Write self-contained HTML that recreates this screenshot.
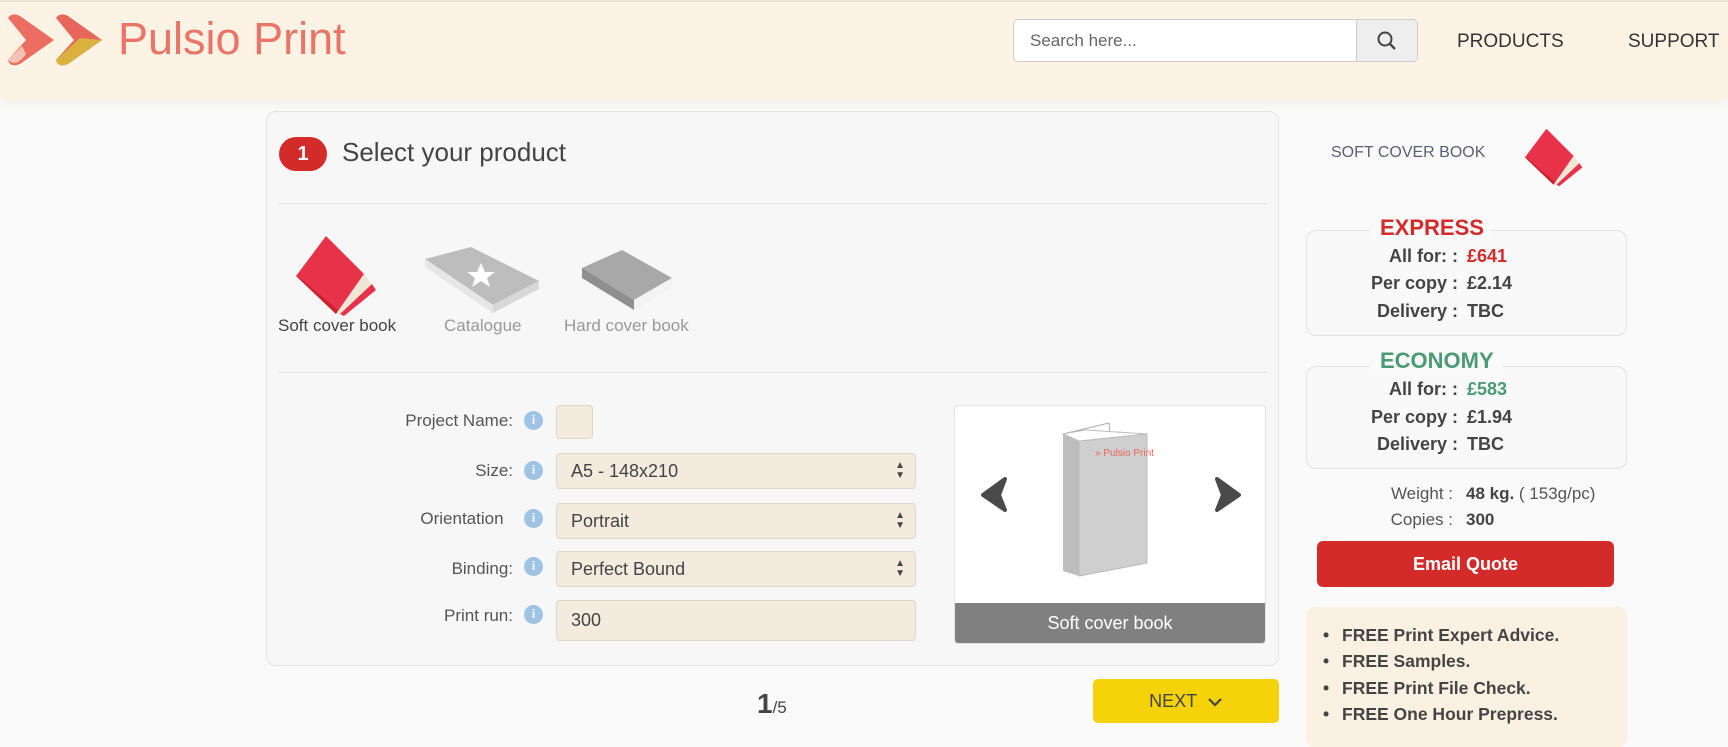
<!DOCTYPE html>
<html><head><meta charset="utf-8"><style>
*{box-sizing:border-box;margin:0;padding:0}
body{width:1728px;height:740px;overflow:hidden;background:#fafafa;font-family:"Liberation Sans",Arial,sans-serif;color:#444;position:relative}
.abs{position:absolute}
.hdr{left:0;top:0;width:1728px;height:100px;background:#fcf3e4;border-top:2px solid #e8e2d8;box-shadow:0 4px 8px #f3f0ea}
.logo{left:118px;top:13px;font-size:45px;color:#ea7468;letter-spacing:0px;font-weight:normal}
.search{left:1013px;top:19px;width:405px;height:43px;background:#fff;border:1px solid #ccc;border-radius:5px;overflow:hidden}
.search span{position:absolute;left:16px;top:11px;font-size:17px;color:#666}
.search .btn{position:absolute;right:0;top:0;width:61px;height:43px;background:#eee;border-left:1px solid #ccc}
.nav{top:31px;font-size:19px;color:#333}
.card{left:266px;top:111px;width:1013px;height:555px;background:#f7f7f7;border:1px solid #e3e3e3;border-radius:10px}
.badge{left:279px;top:137px;width:48px;height:34px;background:#d32a2a;border-radius:17px;color:#fff;font-weight:bold;font-size:20px;text-align:center;line-height:34px}
.title{left:342px;top:137px;font-size:26px;color:#444}
.hr{height:1px;background:#e6e6e6;left:279px;width:988px}
.plabel{font-size:17px;top:316px}
.lab{font-size:17px;color:#555;text-align:right;width:240px;left:273px}
.info{width:19px;height:19px;border-radius:50%;background:#9fc3e4;left:524px;color:#fff;font-size:12px;font-weight:bold;text-align:center;line-height:19px}
.inp{left:556px;width:360px;background:#f4ebdf;border:1px solid #dcd6cc;border-radius:4px;font-size:18px;color:#444;padding-left:14px}
.arr{position:absolute;right:10px;top:50%;margin-top:-10px;font-size:10px;line-height:10px;color:#444}
.prev{left:954px;top:405px;width:312px;height:239px;background:#fff;border:1px solid #e3e3e3;border-radius:4px;overflow:hidden}
.cap{position:absolute;left:0;bottom:0;width:100%;height:40px;background:#808080;color:#fff;font-size:18px;text-align:center;line-height:40px}
.next{left:1093px;top:679px;width:186px;height:44px;background:#f5d20a;border-radius:5px;text-align:center;line-height:44px;font-size:18px;color:#444}
.qbox{left:1306px;width:321px;border:1px solid #e3e3e3;border-radius:10px;background:#f9f9f9}
.qt{font-size:22px;font-weight:bold;background:#fafafa;padding:0 10px;text-align:center}
.row{font-size:18px;font-weight:bold;color:#444}
.row .l{position:absolute;right:270px;white-space:nowrap}
.row .v{position:absolute;left:1467px;white-space:nowrap}
.email{left:1317px;top:541px;width:297px;height:46px;background:#d32a2a;border-radius:6px;color:#fff;font-weight:bold;font-size:18px;text-align:center;line-height:46px}
.free{left:1306px;top:607px;width:321px;height:140px;background:#fbf1e2;border-radius:8px}
.free li{position:absolute;left:36px;font-size:17.5px;font-weight:bold;color:#444;list-style:none;white-space:nowrap}
.free li:before{content:"•";position:absolute;left:-19px}
</style></head><body>
<div class="abs hdr"></div>
<svg class="abs" style="left:4px;top:12px" width="100" height="56" viewBox="0 0 100 56">
<path d="M4 6 Q8 0 16 4 L50 28 L16 52 Q6 56 4 48 L22 28 Z" fill="#ec6e62"/>
<path d="M4 48 L18 34 L22 42 Q12 56 4 48Z" fill="#f2c3b3"/>
<path d="M52 6 Q56 0 64 4 L98 28 L64 52 Q54 56 52 48 L70 28 Z" fill="#e6665c"/>
<path d="M52 48 L76 26 L98 28 L64 52 Q54 56 52 48Z" fill="#d9b13c"/>
</svg>
<div class="abs logo">Pulsio Print</div>
<div class="abs search"><span>Search here...</span><div class="btn"><svg width="61" height="43"><circle cx="28" cy="19" r="6.5" fill="none" stroke="#444" stroke-width="2"/><line x1="33" y1="24" x2="38" y2="29" stroke="#444" stroke-width="2.4"/></svg></div></div>
<div class="abs nav" style="left:1457px">PRODUCTS</div>
<div class="abs nav" style="left:1628px">SUPPORT</div>

<div class="abs card"></div>
<div class="abs badge">1</div>
<div class="abs title">Select your product</div>
<div class="abs hr" style="top:203px"></div>
<svg class="abs" style="left:292px;top:232px" width="92" height="84" viewBox="0 0 92 84">
<path d="M4 44 L34 4 L72 42 L44 82 Z" fill="#e8324a"/>
<path d="M4 44 L44 82 L46 78 L8 46Z" fill="#c92330"/>
<path d="M72 42 L80 52 L50 82 L44 82 Z" fill="#efe6d6"/>
<path d="M80 52 L84 58 L52 84 L48 82Z" fill="#e8324a"/>
</svg>
<svg class="abs" style="left:423px;top:245px" width="118" height="70" viewBox="0 0 118 70">
<path d="M2 14 L48 2 L116 36 L70 60 Z" fill="#bdbdbd"/>
<path d="M2 14 L70 60 L70 68 L2 22Z" fill="#e6e6e6"/>
<path d="M70 60 L116 36 L116 44 L70 68Z" fill="#d8d8d8"/>
<path d="M58 18 L62 27 L72 27 L64 33 L67 42 L58 36 L49 42 L52 33 L44 27 L54 27Z" fill="#fff"/>
</svg>
<svg class="abs" style="left:580px;top:248px" width="94" height="66" viewBox="0 0 94 66">
<path d="M2 20 L42 2 L92 30 L54 52 Z" fill="#a8a8a8"/>
<path d="M2 20 L54 52 L54 62 L2 30Z" fill="#8f8f8f"/>
<path d="M54 52 L92 30 L92 40 L54 62Z" fill="#f3f3f3"/>
</svg>
<div class="abs plabel" style="left:278px;color:#444">Soft cover book</div>
<div class="abs plabel" style="left:444px;color:#999">Catalogue</div>
<div class="abs plabel" style="left:564px;color:#999">Hard cover book</div>
<div class="abs hr" style="top:372px"></div>

<div class="abs lab" style="top:411px">Project Name:</div><div class="abs info" style="top:411px">i</div>
<div class="abs inp" style="top:405px;width:37px;height:34px"></div>
<div class="abs lab" style="top:461px">Size:</div><div class="abs info" style="top:461px">i</div>
<div class="abs inp" style="top:453px;height:36px;line-height:34px">A5 - 148x210<span class="arr">▲<br>▼</span></div>
<div class="abs lab" style="top:509px">Orientation&nbsp;&nbsp;</div><div class="abs info" style="top:509px">i</div>
<div class="abs inp" style="top:503px;height:36px;line-height:34px">Portrait<span class="arr">▲<br>▼</span></div>
<div class="abs lab" style="top:559px">Binding:</div><div class="abs info" style="top:557px">i</div>
<div class="abs inp" style="top:551px;height:36px;line-height:34px">Perfect Bound<span class="arr">▲<br>▼</span></div>
<div class="abs lab" style="top:606px">Print run:</div><div class="abs info" style="top:605px">i</div>
<div class="abs inp" style="top:600px;height:41px;line-height:39px">300</div>

<div class="abs prev">
<svg style="position:absolute;left:0;top:0" width="312" height="200">
<path d="M50 73 L28 89 L50 104 L44 89Z" fill="#4a4a4a" stroke="#4a4a4a" stroke-width="4" stroke-linejoin="round"/>
<path d="M262 73 L284 89 L262 104 L268 89Z" fill="#4a4a4a" stroke="#4a4a4a" stroke-width="4" stroke-linejoin="round"/>
<path d="M108 28 L154 17 L155 27Z" fill="#fff" stroke="#aaa"/>
<path d="M108 28 L124 35 L124 170 L108 165Z" fill="#bdbdbd"/>
<path d="M124 35 L192 28 L192 157 L124 170Z" fill="#cfcfcf" stroke="#bbb"/>
<path d="M108 28 L130 24 L192 28 L124 35Z" fill="#fff" stroke="#bbb"/>
<text x="140" y="50" font-size="10" fill="#e8685c" font-family="Liberation Sans">» Pulsio Print</text>
</svg>
<div class="cap">Soft cover book</div></div>

<div class="abs" style="left:757px;top:688px;font-size:28px;font-weight:bold;color:#444">1<span style="font-size:17px;font-weight:normal">/5</span></div>
<div class="abs next">NEXT &nbsp;<svg width="16" height="10" viewBox="0 0 16 10"><path d="M2 2 L8 8 L14 2" fill="none" stroke="#444" stroke-width="2.2"/></svg></div>

<div class="abs" style="left:1331px;top:144px;font-size:16px;color:#5a6070">SOFT COVER BOOK</div>
<svg class="abs" style="left:1522px;top:124px" width="66" height="64" viewBox="0 0 92 84">
<path d="M4 44 L34 4 L72 42 L44 82 Z" fill="#e8324a"/>
<path d="M4 44 L44 82 L46 78 L8 46Z" fill="#c92330"/>
<path d="M72 42 L80 52 L50 82 L44 82 Z" fill="#efe6d6"/>
<path d="M80 52 L84 58 L52 84 L48 82Z" fill="#e8324a"/>
</svg>

<div class="abs qbox" style="top:230px;height:106px"></div>
<div class="abs qt" style="left:1370px;top:215px;color:#d42a2a;width:120px">EXPRESS</div>
<div class="abs row" style="top:246px;left:0;width:1728px"><span class="l">All for: :</span><span class="v" style="color:#d42a2a">£641</span></div>
<div class="abs row" style="top:273px;left:0;width:1728px"><span class="l">Per copy :</span><span class="v">£2.14</span></div>
<div class="abs row" style="top:301px;left:0;width:1728px"><span class="l">Delivery :</span><span class="v">TBC</span></div>

<div class="abs qbox" style="top:366px;height:103px"></div>
<div class="abs qt" style="left:1370px;top:348px;color:#4a9a73;width:133px">ECONOMY</div>
<div class="abs row" style="top:379px;left:0;width:1728px"><span class="l">All for: :</span><span class="v" style="color:#4a9a73">£583</span></div>
<div class="abs row" style="top:407px;left:0;width:1728px"><span class="l">Per copy :</span><span class="v">£1.94</span></div>
<div class="abs row" style="top:434px;left:0;width:1728px"><span class="l">Delivery :</span><span class="v">TBC</span></div>

<div class="abs row" style="top:484px;left:0;width:1728px;font-weight:normal;font-size:17px;color:#555"><span class="l" style="right:275px">Weight :</span><span class="v" style="left:1466px"><b style="color:#444">48 kg.</b> ( 153g/pc)</span></div>
<div class="abs row" style="top:510px;left:0;width:1728px;font-weight:normal;font-size:17px;color:#555"><span class="l" style="right:275px">Copies :</span><span class="v" style="left:1466px"><b style="color:#444">300</b></span></div>
<div class="abs email">Email Quote</div>
<div class="abs free"><ul>
<li style="top:18px">FREE Print Expert Advice.</li>
<li style="top:44px">FREE Samples.</li>
<li style="top:71px">FREE Print File Check.</li>
<li style="top:97px">FREE One Hour Prepress.</li>
</ul></div>
</body></html>
